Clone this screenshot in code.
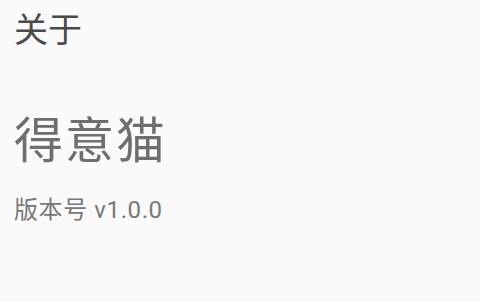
export default function App() {
  return (
    <div
      className="w-[480px] h-[302px] bg-[#fafafa] px-[14px] overflow-hidden"
      style={{ fontFamily: 'Roboto, "Noto Sans CJK SC", sans-serif' }}
    >
      <div className="pt-[10px] text-[34px] leading-[40px] text-[#4a4a4a]">关于</div>
      <div className="mt-[64px] text-[49px] leading-[56px] tracking-[2px] text-[#6e6e6e]">得意猫</div>
      <div className="mt-[25px] text-[24px] leading-[30px] tracking-[0.6px] text-[#787878]">版本号 v1.0.0</div>
    </div>
  );
}
